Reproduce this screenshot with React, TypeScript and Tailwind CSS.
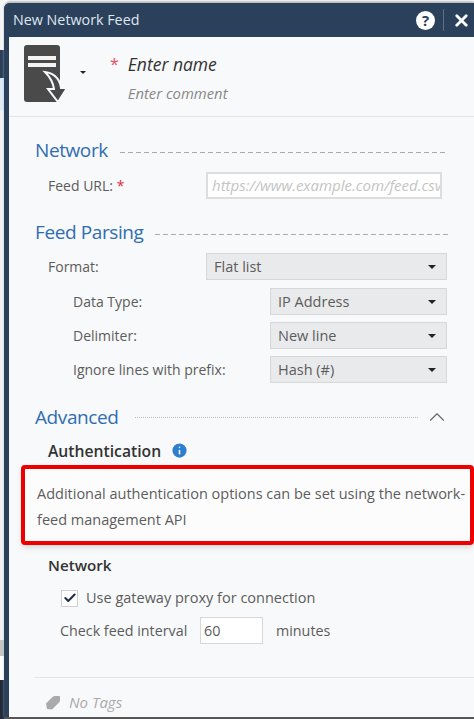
import { Check, ChevronUp, Info, X } from "lucide-react";

const Caret = () => (
  <span className="w-0 h-0 border-x-[4px] border-x-transparent border-t-[4px] border-t-[#222]"></span>
);

const SectionTitle = ({ title, dotted }: { title: string; dotted?: boolean }) => (
  <div className={dotted ? "flex items-center gap-4 pr-[26px]" : "flex items-center gap-3 pr-[26px]"}>
    <h2 className="text-[19px] leading-[28px] tracking-[-0.4px] text-[#2f6db3]">{title}</h2>
    <div className={dotted ? "flex-1 border-t border-dotted border-[#bbb]" : "flex-1 mt-1 h-px bg-[repeating-linear-gradient(90deg,#a9a9b8_0_5px,transparent_5px_8px)]"}></div>
  </div>
);

const SelectRow = ({ label, value, nested }: { label: string; value: string; nested?: boolean }) => (
  <div className={nested ? "flex items-center h-[27px] mt-[7px] pl-[73px] pr-[27px]" : "flex items-center h-[27px] pl-[48px] pr-[27px]"}>
    <span className="flex-1 text-[14px] text-[#5c5c5c]">{label}</span>
    <div className={nested ? "w-[177px] h-full flex items-center justify-between pl-[7px] pr-[10px] bg-[#e9eaeb] border border-[#d6d7d9] text-[14.5px] text-[#5c5c5c]" : "w-[241px] h-full flex items-center justify-between pl-[7px] pr-[10px] bg-[#e9eaeb] border border-[#d6d7d9] text-[14.5px] text-[#5c5c5c]"}>
      {value}
      <Caret />
    </div>
  </div>
);

const App = () => {
  return (
    <div className="w-[474px] h-[719px] overflow-hidden flex bg-white font-['Open_Sans',sans-serif]">
      {/* what is left of the page behind the dialog */}
      <div className="w-1 flex flex-col shrink-0">
        <div className="h-[50px] bg-[#f4f5f6]"></div>
        <div className="h-[28px] bg-[#2b405a]"></div>
        <div className="h-[32px] bg-[#dceaf7]"></div>
        <div className="h-[530px] bg-[#f0f2f5]"></div>
        <div className="h-[16px] bg-[#c4c6c6]"></div>
        <div className="h-[24px] bg-white"></div>
        <div className="flex-1 bg-[#1f2b3a]"></div>
      </div>

      <div className="flex-1 flex flex-col mt-[3px] border-l-[5px] border-[#2b405a] rounded-tl-md bg-[#f8f9fa] shadow-[0_-2px_2px_#bbb]">
        {/* title bar */}
        <div className="h-[34px] -ml-[5px] shrink-0 flex items-center pl-[9px] pr-[3px] bg-[#2b405a] rounded-tl-md text-white">
          <span className="flex-1 text-[14.3px] text-[#dfe6ee]">New Network Feed</span>
          <span className="w-[19px] h-[19px] rounded-full bg-white text-[#2b405a] text-[15px] font-bold flex items-center justify-center">?</span>
          <span className="w-px h-[22px] bg-[#5d6f85] mx-[8px]"></span>
          <X size={19} strokeWidth={3.5} />
        </div>

        {/* name block */}
        <div className="h-[80px] shrink-0 flex border-b border-[#e4e5e6]">
          <svg className="ml-[15px] mt-[8px]" width="46" height="60" viewBox="0 0 46 60">
            <path d="M3 0h30a3 3 0 0 1 3 3v51a3 3 0 0 1-3 3H3a3 3 0 0 1-3-3V3a3 3 0 0 1 3-3z" fill="#4a4a4a" />
            <rect x="4" y="11" width="28" height="4" fill="#f4f4f4" />
            <rect x="4" y="18" width="28" height="4" fill="#f4f4f4" />
            <path d="M21 27c9 1 15 7 16 16h6l-9 14-10-13h6c-1-7-4-12-9-17z" fill="#4a4a4a" stroke="#f8f9fa" strokeWidth="2" />
          </svg>
          <span className="ml-[10px] mt-[34px] w-0 h-0 border-x-[3px] border-x-transparent border-t-[3px] border-t-[#222]"></span>
          <span className="ml-[24px] mt-[17px] text-[16px] leading-[20px] text-[#e8505f]">*</span>
          <div className="ml-[9px] pt-[15px] italic">
            <div className="text-[17.5px] leading-[24px] text-[#333]">Enter name</div>
            <div className="mt-[7px] text-[14.8px] leading-[20px] text-[#888]">Enter comment</div>
          </div>
        </div>

        {/* network */}
        <div className="mt-[19px] pl-[26px]">
          <SectionTitle title="Network" />
        </div>
        <div className="mt-[8px] flex items-center h-[27px] pl-[39px]">
          <span className="w-[158px] text-[14px] text-[#5c5c5c]">
            Feed URL: <span className="text-[#e8283c]">*</span>
          </span>
          <div className="w-[236px] h-full flex items-center overflow-hidden whitespace-nowrap px-1 bg-white border-2 border-[#dcdddf] italic text-[15px] text-[#c4c4c4]">
            https://www.example.com/feed.csv
          </div>
        </div>

        {/* feed parsing */}
        <div className="mt-[19px] pl-[26px]">
          <SectionTitle title="Feed Parsing" />
        </div>
        <div className="mt-[7px] -ml-[9px]">
          <SelectRow label="Format:" value="Flat list" />
          <div className="pt-px">
            <SelectRow nested label="Data Type:" value="IP Address" />
            <SelectRow nested label="Delimiter:" value="New line" />
            <SelectRow nested label="Ignore lines with prefix:" value="Hash (#)" />
          </div>
        </div>

        {/* advanced */}
        <div className="mt-[20px] pl-[26px] flex items-center">
          <div className="flex-1">
            <SectionTitle title="Advanced" dotted />
          </div>
          <ChevronUp className="mr-[24px] -ml-[20px] text-[#666]" size={26} strokeWidth={1} />
        </div>
        <div className="mt-[9px] h-[24px] pl-[39px] flex items-center gap-[9px]">
          <span className="text-[15.7px] font-semibold text-[#333]">Authentication</span>
          <Info size={19} className="-mt-[3px] text-white fill-[#2f7fd0]" />
        </div>

        {/* highlighted note */}
        <div className="mt-[1px] ml-[12px] h-[80px] flex items-center pt-[3px] pl-[12px] pr-[4px] bg-[#fcfcfc] border-[4px] border-[#ee0000] rounded-sm shadow-md text-[14.5px] leading-[26px] text-[#5c5c5c]">
          Additional authentication options can be set using the network-feed management API
        </div>

        <div className="mt-[8px] pl-[39px] text-[15.2px] leading-[24px] font-semibold text-[#333]">Network</div>
        <div className="mt-[12px] ml-[52px] h-[18px] flex items-center gap-2 text-[14.5px] text-[#5c5c5c]">
          <span className="w-[17px] h-[17px] flex items-center justify-center bg-white border border-[#cfd0d2]">
            <Check size={14} strokeWidth={3.5} className="text-[#1f2f45]" />
          </span>
          Use gateway proxy for connection
        </div>
        <div className="mt-[10px] ml-[51px] h-[27px] flex items-center text-[14.3px] text-[#5c5c5c]">
          <span className="w-[140px]">Check feed interval</span>
          <span className="w-[63px] h-full flex items-center pl-[3px] bg-white border border-[#d6d7d9]">60</span>
          <span className="ml-[13px]">minutes</span>
        </div>

        {/* tags */}
        <div className="mt-[33px] ml-[25px] border-t border-[#e4e5e6]"></div>
        <div className="flex-1 ml-[36px] pt-[9px] flex items-center gap-2 italic text-[15px] text-[#aaa]">
          <svg width="16" height="15" viewBox="0 0 16 15">
            <path d="M2 14 L1 8.5 L8 1.5 Q9 1 10 1 L14 1 Q15 1 15 2 L15 5.5 Q15 6.5 14 7.5 L7 14.5 Z" fill="#aaa" />
          </svg>
          No Tags
        </div>
        <div className="h-[2px] -ml-[5px] bg-[#555]"></div>
      </div>
    </div>
  );
};

export default App;
